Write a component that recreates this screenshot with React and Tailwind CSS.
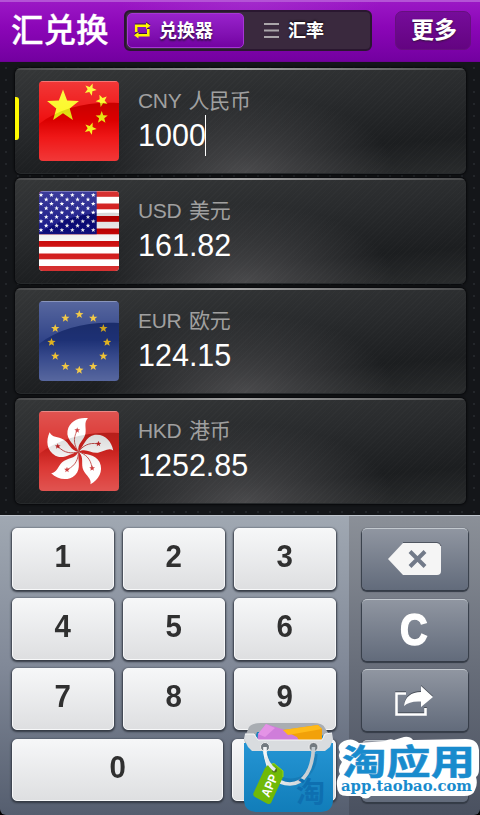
const rates = [
  { code: 'CNY', name: '人民币', value: '1000', Flag: ChinaFlag, active: true },
  { code: 'USD', name: '美元', value: '161.82', Flag: UsaFlag },
  { code: 'EUR', name: '欧元', value: '124.15', Flag: EuroFlag },
  { code: 'HKD', name: '港币', value: '1252.85', Flag: HongKongFlag },
]

function starPoints(cx, cy, r, rot = 0) {
  return Array.from({ length: 10 }, (_, i) => {
    const radius = i % 2 ? r * 0.42 : r
    const a = ((i * 36 - 90 + rot) * Math.PI) / 180
    return `${(cx + radius * Math.cos(a)).toFixed(2)},${(cy + radius * Math.sin(a)).toFixed(2)}`
  }).join(' ')
}

function FlagFrame({ id, gloss = 0.2, children }) {
  return (
    <svg viewBox="0 0 80 80" className="block size-20 shrink-0 rounded">
      <defs>
        <linearGradient id={`${id}-top`} x1="0" y1="0" x2="0" y2="1">
          <stop offset="0" stopColor="#fff" stopOpacity={gloss} />
          <stop offset="1" stopColor="#fff" stopOpacity={gloss * 0.25} />
        </linearGradient>
        <linearGradient id={`${id}-shade`} x1="0" y1="0" x2="0" y2="1">
          <stop offset="0" stopColor="#000" stopOpacity="0.16" />
          <stop offset="0.45" stopColor="#000" stopOpacity="0.04" />
          <stop offset="0.6" stopColor="#000" stopOpacity="0" />
        </linearGradient>
        <linearGradient id={`${id}-low`} x1="0" y1="0" x2="0" y2="1">
          <stop offset="0.3" stopColor="#fff" stopOpacity="0" />
          <stop offset="1" stopColor="#fff" stopOpacity={gloss} />
        </linearGradient>
      </defs>
      {children}
      <path d="M0 0H80V22C50 20 20 27 0 43Z" fill={`url(#${id}-top)`} />
      <path d="M0 43C20 27 50 20 80 22V80H0Z" fill={`url(#${id}-shade)`} />
      <path d="M0 43C20 27 50 20 80 22V80H0Z" fill={`url(#${id}-low)`} />
      <path d="M2 .5H78" stroke="#fff" strokeOpacity="0.3" />
    </svg>
  )
}

function ChinaFlag() {
  return (
    <FlagFrame id="cn" gloss={0.22}>
      <rect width="80" height="80" fill="#ee0000" />
      <g fill="#fcf814">
        <polygon points={starPoints(24, 25.3, 16.8)} />
        <polygon points={starPoints(51.3, 8.5, 6.4, 22)} />
        <polygon points={starPoints(63, 19.7, 6.4, 48)} />
        <polygon points={starPoints(62.7, 36.5, 6.4)} />
        <polygon points={starPoints(51.3, 47.5, 6.4, 22)} />
      </g>
    </FlagFrame>
  )
}

function UsaFlag() {
  return (
    <FlagFrame id="us" gloss={0.2}>
      <rect width="80" height="80" fill="#fff" />
      {[0, 2, 4, 6, 8, 10, 12].map((n) => (
        <rect key={n} y={n * 6.25} width="80" height="5.8" fill="#cc0000" />
      ))}
      <rect width="57.7" height="43.2" fill="#0c0c82" />
      {Array.from({ length: 9 }, (_, row) =>
        Array.from({ length: row % 2 ? 5 : 6 }, (_, col) => (
          <polygon
            key={`${row}-${col}`}
            points={starPoints(2 + col * 10.45 + (row % 2 ? 5.2 : 0), 4.1 + row * 4.37, 2.4)}
            fill="#fff"
          />
        )),
      )}
    </FlagFrame>
  )
}

function EuroFlag() {
  return (
    <FlagFrame id="eu" gloss={0.25}>
      <rect width="80" height="80" fill="#20357f" />
      {Array.from({ length: 12 }, (_, i) => {
        const a = (i * Math.PI) / 6
        return (
          <polygon
            key={i}
            points={starPoints(40.3 + 27.8 * Math.sin(a), 41.3 - 27.8 * Math.cos(a), 4.4)}
            fill="#efbd20"
          />
        )
      })}
    </FlagFrame>
  )
}

function HongKongFlag() {
  return (
    <FlagFrame id="hk" gloss={0.22}>
      <rect width="80" height="80" fill="#d82420" />
      {[0, 72, 144, 216, 288].map((deg) => (
        <g key={deg} transform={`rotate(${deg} 39.5 40.7)`}>
          <path
            d="M39.5 40.7C36 34 27 29 28.5 20C30.5 10 40 6 49 7.3C44.500 11 47.500 17 46.500 22.500C45 30 38 32 39.5 40.7Z"
            fill="#fff"
          />
          <path d="M39.5 40.7C35.500 35 33.500 28 38 20" fill="none" stroke="#c8504e" strokeWidth="0.9" />
          <polygon points={starPoints(38.2, 19.3, 3)} fill="#c8282a" />
        </g>
      ))}
    </FlagFrame>
  )
}

function Header() {
  return (
    <header className="flex h-[62px] shrink-0 items-center border-b border-[#6d0294] bg-[radial-gradient(ellipse_130px_50px_at_250px_0px,#ac3dd380,transparent),linear-gradient(#9c18c6,#8b06b7_45%,#7300a0)] text-white shadow-[inset_0_2px_0_#b453d6]">
      <h1 className="ml-[11px] w-[113px] text-[32.5px] leading-[62px] font-medium [-webkit-text-stroke:0.3px_white]">
        汇兑换
      </h1>
      <div className="flex h-[41px] w-[248px] rounded-md border-2 border-[#2a1730] bg-[#3a293e] p-px">
        <div className="flex h-[35px] w-[117px] items-center rounded-[5px] border border-[#a637d5] bg-linear-to-b from-[#9922cc] to-[#7302a2] pl-[6px]">
          <svg width="17" height="17" viewBox="0 0 17 17" className="drop-shadow-[0_-1px_0_#39104b]">
            <path d="M2.2 10V3.700H12M14.300 7V13.300H4" fill="none" stroke="#fff500" strokeWidth="2.600" />
            <path d="M12 .500L16.500 3.700L12 7ZM4.500 10L0 13.300L4.500 16.500Z" fill="#fff500" />
          </svg>
          <span className="ml-[8px] text-[18px] leading-[34px] font-bold [text-shadow:0_2px_2px_#321044]">兑换器</span>
        </div>
        <div className="flex h-[35px] items-center pl-[20px]">
          <svg width="16" height="17" viewBox="0 0 16 17">
            <path d="M0 2H15M0 8.500H15M0 15H15" stroke="#aaa5aa" strokeWidth="2.200" />
          </svg>
          <span className="ml-[8px] text-[18px] leading-[34px] font-bold [text-shadow:0_-1px_2px_#100812]">汇率</span>
        </div>
      </div>
      <button className="ml-[23px] h-[39px] w-[76px] rounded-[7px] border border-[#66107f] bg-linear-to-b from-[#760c9a] to-[#630481] pl-[2px] text-[23px] leading-[35px] font-bold [text-shadow:0_1px_2px_#35103f]">
        更多
      </button>
    </header>
  )
}

function RateCard({ code, name, value, Flag, active }) {
  return (
    <div className="relative flex h-[106px] w-[451px] shrink-0 overflow-hidden rounded-md border-b border-[#26292b] bg-[repeating-linear-gradient(135deg,#ffffff04_0_1px,transparent_1px_4px),radial-gradient(ellipse_150px_80px_at_230px_106px,#4a4a4c,transparent),linear-gradient(175deg,#353738,#292b2d_40%,#1c1e20_75%,#292b2c)] pt-[13px] shadow-[0_0_2px_1px_#08090b]">
      <div className="absolute inset-x-0 top-0 h-[2px] bg-linear-to-r from-[#48494a] via-[#a5a5a5] to-[#48494a]" />
      {active && <div className="absolute top-[29px] left-0 h-[43px] w-1 rounded-r-[3px] bg-[#fffa00]" />}
      <div className="ml-6">
        <Flag />
      </div>
      <div className="ml-[19px]">
        <div className="mt-[6px] text-[21px] leading-7 tracking-[-0.3px] [word-spacing:2px] whitespace-nowrap text-[#a0a0a0]">
          {code} {name}
        </div>
        <div className="flex h-[41px] items-center text-[30.500px] leading-[41px] text-white">
          {value}
          {active && <span className="-ml-px h-[41px] w-px bg-white" />}
        </div>
      </div>
    </div>
  )
}

function NumberKey({ label, className = 'w-[102px]' }) {
  return (
    <button
      className={`${className} h-[62px] rounded-[5px] border border-[#f7f8f9] bg-linear-to-b from-[#f6f7f8] to-[#dedfe1] pb-[4px] text-[31px] font-bold text-[#303030] shadow-[0_1px_2px_1px_#343a44]`}
    >
      <span className="inline-block scale-x-95">{label}</span>
    </button>
  )
}

function ActionKey({ children }) {
  return (
    <div className="flex h-[62px] w-[106px] items-center justify-center rounded-[5px] border-t border-[#c2c8ce] bg-linear-to-b from-[#9096a1] to-[#626b7b] pr-[2px] shadow-[0_1px_1px_1px_#343b46]">
      {children}
    </div>
  )
}

function Keypad() {
  return (
    <div className="flex h-[300px] shrink-0 overflow-hidden rounded-b-md border-t border-[#c0c6ce]">
      <div className="flex w-[349px] flex-col gap-2 bg-linear-to-b from-[#a0a8b2] via-[#818998] to-[#555e6f] pt-[12px] pl-[12px]">
        {[['1', '2', '3'], ['4', '5', '6'], ['7', '8', '9']].map((row) => (
          <div key={row[0]} className="flex gap-[9px]">
            {row.map((n) => (
              <NumberKey key={n} label={n} />
            ))}
          </div>
        ))}
        <div className="mt-px flex gap-[9px]">
          <NumberKey label="0" className="w-[211px]" />
          <NumberKey className="w-[104px]" />
        </div>
      </div>
      <div className="flex flex-1 flex-col gap-[8.500px] bg-linear-to-b from-[#8b9098] via-[#686e7a] to-[#4a5160] pt-[12px] pl-[13px]">
        <ActionKey>
          <svg width="55" height="34" viewBox="0 0 55 34" className="mb-[2px]">
            <path d="M1 17L16 1H50Q54 1 54 5V29Q54 33 50 33H16Z" fill="#f5f5f5" />
            <path d="M16 .500H50Q53 .500 54 4" fill="none" stroke="#505661" />
            <path d="M23 9.500L38 24.500M38 9.500L23 24.500" stroke="#727a89" strokeWidth="4" />
          </svg>
        </ActionKey>
        <ActionKey>
          <span className="inline-block scale-x-[0.87] text-[44px] leading-none font-bold text-white [-webkit-text-stroke:1.5px_white] [text-shadow:0_-1px_0_#59606b]">
            C
          </span>
        </ActionKey>
        <ActionKey>
          <svg width="40" height="32" viewBox="0 0 40 32" className="drop-shadow-[0_-1px_0_#484e58]">
            <path d="M12 8.500H2.500V29.500H31.500V23" fill="none" stroke="#fff" strokeWidth="2.600" />
            <path d="M27 1L39 12L27 22V16.500C19 16 14 17.500 10 21C11 12 17 7 27 7Z" fill="#fff" />
          </svg>
        </ActionKey>
        <ActionKey />
      </div>
    </div>
  )
}

function StoreBadge() {
  return (
    <svg viewBox="0 0 240 96" className="absolute right-0 bottom-0 h-24 w-60 overflow-visible">
      <defs>
        <linearGradient id="bag" x1="0" y1="0" x2="0" y2="1">
          <stop offset="0" stopColor="#2595d4" />
          <stop offset="1" stopColor="#117db9" />
        </linearGradient>
        <linearGradient id="handle" x1="0" y1="0" x2="1" y2="0">
          <stop offset="0" stopColor="#f4f5f6" />
          <stop offset="1" stopColor="#c3cbd0" />
        </linearGradient>
      </defs>
      {/* shopping bag */}
      <path d="M4 20L9 8Q12 4 21 4H73Q83 4 85 9L92 20L90 31H7Z" fill="#a9adb2" />
      <path d="M15 19L17 13H80L83 17V27H16Z" fill="#1784bd" />
      <path d="M18 15L26 5L58 15L65 27H17Z" fill="#cf7dda" />
      <path d="M18 15L26 5L35 9L25 18Z" fill="#e493e6" />
      <path d="M43 11L78 6L82 10V25H61L57 18Z" fill="#f2a109" />
      <path d="M43 11L78 6L82 10L48 16Z" fill="#ffba19" />
      <path d="M4 24H93V82Q92 93 80 93H17Q5 93 4 82Z" fill="url(#bag)" />
      <path d="M5 15L14 15L18 21H82L85 15L92 14L93 20L90 28L85 32H12L8 28L4 20Z" fill="#d9dcdf" />
      <path d="M5 15L14 15L18 21H82L85 15L92 14" fill="none" stroke="#f6f7f8" />
      <path d="M26 35V38C30 54 38 62 51 62C65 62 75 50 75 35" fill="none" stroke="#10699f" strokeOpacity=".4" strokeWidth="5" />
      <circle cx="25" cy="28" r="4.500" fill="#737a80" stroke="#eee" />
      <circle cx="73.500" cy="28" r="4.500" fill="#737a80" stroke="#eee" />
      <path d="M25 28V34C29 55 36 65 50 65C64 65 73 50 73.500 28" fill="none" stroke="url(#handle)" strokeWidth="3.600" />
      <path d="M28 46L34 44.500L43 52L43 58L31 84Q29 86 26 84L15 78Q12 76 14 73L25 49Z" fill="#70b907" />
      <path d="M28 46L34 44.500L43 52V58" fill="none" stroke="#91d31c" />
      <circle cx="34.500" cy="51" r="2.500" fill="#4d6f18" />
      <path d="M26 38Q29 47 35 51" fill="none" stroke="#e7eaec" strokeWidth="3.400" />
      <text transform="translate(29 79) rotate(-66)" textLength="23" lengthAdjust="spacingAndGlyphs" fill="#fff" fontFamily="Liberation Sans" fontWeight="700" fontSize="13">APP</text>
      <text x="56" y="84" fill="#0e6fb0" fontFamily="Noto Sans CJK SC" fontWeight="700" fontSize="29">淘</text>
      {/* store name and address */}
      <path
        d="M104 22Q112 18 119 24L145 22Q150 19 154 21L164 18Q170 17 173 21L226 20Q238 20 239 31V50Q239 56 236 58Q238 65 235 71Q233 77 224 77H131Q126 82 120 77H107Q97 77 97 67Q96 60 100 55Q97 50 102 43Q97 38 100 33Q96 26 104 22Z"
        fill="#fff"
      />
      <g fill="#198bcd" fontWeight="700">
        <text x="102" y="55.5" textLength="133" lengthAdjust="spacingAndGlyphs" stroke="#198bcd" strokeWidth="0.5" fontFamily="Noto Sans CJK SC" fontSize="35">淘应用</text>
        <text x="101" y="72" textLength="131" lengthAdjust="spacingAndGlyphs" fontFamily="DejaVu Serif" fontSize="15">app.taobao.com</text>
      </g>
    </svg>
  )
}

export default function App() {
  return (
    <div className="relative flex h-[815px] w-[480px] flex-col overflow-hidden bg-black font-['Liberation_Sans','Noto_Sans_CJK_SC',sans-serif]">
      <Header />
      <main className="flex h-[453px] shrink-0 flex-col gap-1 bg-[#141619] bg-[radial-gradient(#23262a_1px,transparent_1.500px)] bg-size-[12px_12px] pt-[6px] pl-[15px]">
        {rates.map((rate) => (
          <RateCard key={rate.code} {...rate} />
        ))}
      </main>
      <Keypad />
      <StoreBadge />
    </div>
  )
}
